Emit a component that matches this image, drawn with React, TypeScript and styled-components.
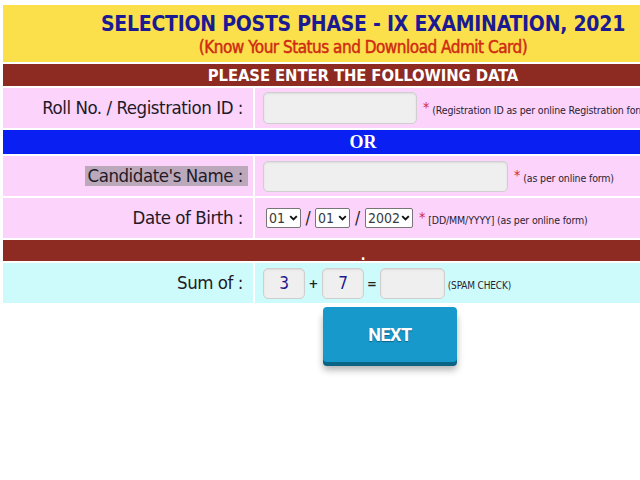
import React from "react";
import styled, { createGlobalStyle } from "styled-components";

const GlobalStyle = createGlobalStyle`
  html {
    overflow: hidden;
  }
  body {
    margin: 0;
    padding: 0;
    background: #ffffff;
    font-family: "DejaVu Sans Condensed", "DejaVu Sans", sans-serif;
  }
`;

const Page = styled.div`
  width: 720px;
  padding: 5px 0 20px 3px;
`;

const FormGrid = styled.div`
  display: grid;
  grid-template-columns: 250px 468px;
  gap: 2px;
`;

const Banner = styled.div`
  grid-column: 1 / span 2;
  height: 57px;
  background: #fbe04c;
  display: flex;
  flex-direction: column;
  align-items: center;
  justify-content: center;
`;

const Title = styled.div`
  font-family: "DejaVu Sans Condensed", "DejaVu Sans", sans-serif;
  font-weight: bold;
  font-size: 21px;
  letter-spacing: -0.25px;
  line-height: 25px;
  color: #1b1a93;
  margin-top: 2px;
`;

const SubTitle = styled.div`
  font-family: "DejaVu Sans Condensed", "DejaVu Sans", sans-serif;
  font-weight: normal;
  font-size: 17px;
  letter-spacing: -0.5px;
  line-height: 20px;
  color: #d02a12;
  -webkit-text-stroke: 0.45px #d02a12;
`;

const Bar = styled.div<{ $bg: string; $h: number; $serif?: boolean }>`
  grid-column: 1 / span 2;
  height: ${(p) => p.$h}px;
  background: ${(p) => p.$bg};
  color: #ffffff;
  display: flex;
  align-items: center;
  justify-content: center;
  font-family: ${(p) =>
    p.$serif
      ? '"Liberation Serif", "DejaVu Serif", serif'
      : '"DejaVu Sans Condensed", "DejaVu Sans", sans-serif'};
  font-weight: bold;
  font-size: ${(p) => (p.$serif ? 18 : 16.5)}px;
  letter-spacing: ${(p) => (p.$serif ? 0 : -0.1)}px;
`;

const Dot = styled.span`
  font-size: 14px;
  line-height: 14px;
  margin-top: 8px;
`;

const LabelCell = styled.div<{ $bg: string }>`
  height: 40px;
  background: ${(p) => p.$bg};
  display: flex;
  align-items: center;
  justify-content: flex-end;
  padding-right: 5px;
  box-sizing: border-box;
`;

const LabelText = styled.span<{ $hl?: boolean }>`
  font-family: "DejaVu Sans Condensed", "DejaVu Sans", sans-serif;
  font-size: 18.5px;
  letter-spacing: -0.45px;
  line-height: 20px;
  color: #1f1a27;
  padding: 0 5px 0 2px;
  background: ${(p) => (p.$hl ? "#bba8bb" : "transparent")};
`;

const FieldCell = styled.div<{ $bg: string; $pl?: number }>`
  height: 40px;
  background: ${(p) => p.$bg};
  display: flex;
  align-items: center;
  padding-left: ${(p) => p.$pl ?? 8}px;
  box-sizing: border-box;
  white-space: nowrap;
  overflow: hidden;
`;

const TextBox = styled.div<{ $w: number; $h?: number }>`
  width: ${(p) => p.$w}px;
  height: ${(p) => p.$h ?? 31}px;
  box-sizing: border-box;
  background: #efefef;
  border: 1px solid #cfcfcf;
  border-radius: 5px;
  box-shadow: inset 0 1px 2px rgba(0, 0, 0, 0.08);
  flex-shrink: 0;
  display: flex;
  align-items: center;
  justify-content: center;
  font-family: "DejaVu Sans Condensed", "DejaVu Sans", sans-serif;
  font-size: 17px;
  color: #1d1a8e;
`;

const Star = styled.span`
  color: #d3233a;
  font-size: 14px;
  margin: 0 3px 0 6px;
  position: relative;
  top: -1px;
`;

const Hint = styled.span<{ $size?: number }>`
  font-family: "DejaVu Sans Condensed", "DejaVu Sans", sans-serif;
  font-size: ${(p) => p.$size ?? 10.5}px;
  letter-spacing: -0.15px;
  color: #2a1e33;
  position: relative;
  top: 2px;
`;

const SelectWrap = styled.span<{ $w: number }>`
  position: relative;
  display: inline-flex;
  width: ${(p) => p.$w}px;
  height: 20px;
  flex-shrink: 0;
`;

const Select = styled.select`
  appearance: none;
  -webkit-appearance: none;
  width: 100%;
  height: 100%;
  box-sizing: border-box;
  font-family: "DejaVu Sans Condensed", "DejaVu Sans", sans-serif;
  font-size: 14px;
  color: #3a3a3a;
  background: #ffffff;
  border: 1px solid #767676;
  border-radius: 2px;
  padding: 0 12px 0 2px;
  outline: none;
`;

const Chevron = styled.svg`
  position: absolute;
  right: 3px;
  top: 7px;
  width: 9px;
  height: 6px;
  pointer-events: none;
`;

const Sep = styled.span<{ $w: number }>`
  width: ${(p) => p.$w}px;
  text-align: center;
  font-family: "DejaVu Sans Condensed", "DejaVu Sans", sans-serif;
  font-size: 17px;
  color: #222222;
  flex-shrink: 0;
`;

const Op = styled.span<{ $w: number }>`
  width: ${(p) => p.$w}px;
  text-align: center;
  font-family: "DejaVu Sans Condensed", "DejaVu Sans", sans-serif;
  font-weight: bold;
  font-size: 13px;
  color: #222222;
  flex-shrink: 0;
`;

const ButtonRow = styled.div`
  padding: 4px 0 0 320px;
`;

const NextButton = styled.button`
  width: 134px;
  height: 55px;
  border: none;
  border-radius: 4px;
  background: #1799cb;
  box-shadow: 0 4px 0 #0b6486, 0 8px 7px rgba(0, 0, 0, 0.3);
  color: #ffffff;
  font-family: Roboto, "DejaVu Sans Condensed", sans-serif;
  font-weight: bold;
  font-size: 18px;
  letter-spacing: -0.5px;
  text-shadow: 0 1px 1px rgba(0, 0, 0, 0.35);
  cursor: pointer;
`;

const PINK = "#fbd3fb";
const CYAN = "#cdfbfb";

function DateSelect({ w, value }: { w: number; value: string }) {
  return (
    <SelectWrap $w={w}>
      <Select defaultValue={value}>
        <option value={value}>{value}</option>
      </Select>
      <Chevron viewBox="0 0 9 6">
        <path d="M1.2 1.2 L4.5 4.5 L7.8 1.2" fill="none" stroke="#111" strokeWidth="1.9" />
      </Chevron>
    </SelectWrap>
  );
}

export default function App() {
  return (
    <>
      <GlobalStyle />
      <Page>
        <FormGrid>
          <Banner>
            <Title>SELECTION POSTS PHASE - IX EXAMINATION, 2021</Title>
            <SubTitle>(Know Your Status and Download Admit Card)</SubTitle>
          </Banner>
          <Bar $bg="#8d2a22" $h={22}>PLEASE ENTER THE FOLLOWING DATA</Bar>

          <LabelCell $bg={PINK}>
            <LabelText>Roll No. / Registration ID :</LabelText>
          </LabelCell>
          <FieldCell $bg={PINK}>
            <TextBox $w={154} $h={32} />
            <Star>*</Star>
            <Hint>(Registration ID as per online Registration form)</Hint>
          </FieldCell>

          <Bar $bg="#0a1ff2" $h={24} $serif>OR</Bar>

          <LabelCell $bg={PINK}>
            <LabelText $hl>Candidate's Name :</LabelText>
          </LabelCell>
          <FieldCell $bg={PINK}>
            <TextBox $w={245} />
            <Star>*</Star>
            <Hint>(as per online form)</Hint>
          </FieldCell>

          <LabelCell $bg={PINK}>
            <LabelText>Date of Birth :</LabelText>
          </LabelCell>
          <FieldCell $bg={PINK} $pl={11}>
            <DateSelect w={35} value="01" />
            <Sep $w={14}>/</Sep>
            <DateSelect w={35} value="01" />
            <Sep $w={15}>/</Sep>
            <DateSelect w={48} value="2002" />
            <Star>*</Star>
            <Hint>[DD/MM/YYYY] (as per online form)</Hint>
          </FieldCell>

          <Bar $bg="#8d2a22" $h={21}>
            <Dot>.</Dot>
          </Bar>

          <LabelCell $bg={CYAN}>
            <LabelText>Sum of :</LabelText>
          </LabelCell>
          <FieldCell $bg={CYAN}>
            <TextBox $w={42}>3</TextBox>
            <Op $w={17}>+</Op>
            <TextBox $w={42}>7</TextBox>
            <Op $w={16}>=</Op>
            <TextBox $w={65} />
            <Hint $size={10}>&nbsp;(SPAM CHECK)</Hint>
          </FieldCell>
        </FormGrid>
        <ButtonRow>
          <NextButton type="button">NEXT</NextButton>
        </ButtonRow>
      </Page>
    </>
  );
}
